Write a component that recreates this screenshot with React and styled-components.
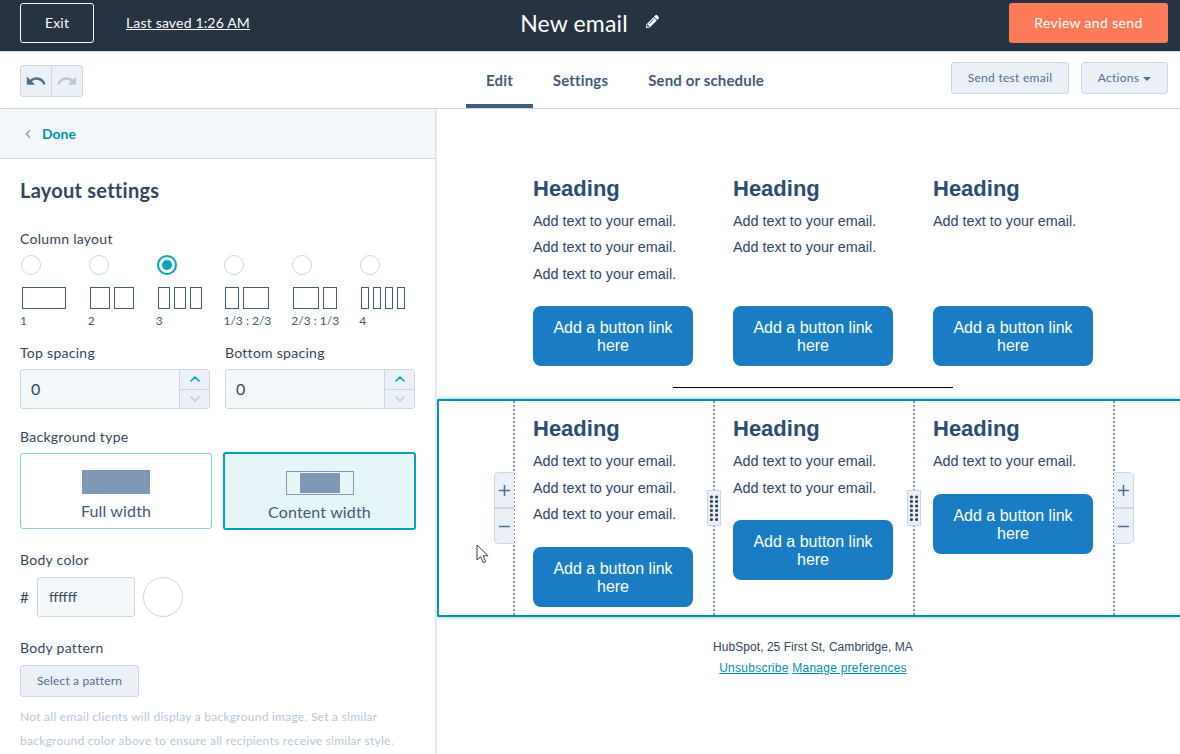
import styled, { createGlobalStyle } from "styled-components";
import { FaPencilAlt } from "react-icons/fa";
import { MdUndo, MdRedo } from "react-icons/md";
import { ChevronLeft, ChevronUp, ChevronDown, Plus, Minus } from "lucide-react";

const GlobalStyle = createGlobalStyle`
  html, body {
    margin: 0;
    padding: 0;
    background: #fff;
    font-family: "Lato", "Liberation Sans", sans-serif;
    color: #33475b;
  }
  * {
    box-sizing: border-box;
  }
`;

const layouts = [
  { label: "1", cells: [44] },
  { label: "2", cells: [20, 20] },
  { label: "3", cells: [12, 12, 12], selected: true },
  { label: "1/3 : 2/3", cells: [14, 26] },
  { label: "2/3 : 1/3", cells: [26, 14] },
  { label: "4", cells: [8, 8, 8, 8] },
];

const columnLines = [3, 2, 1];

const dots = "repeating-linear-gradient(to bottom, #7c98b6 0 2px, transparent 2px 4px)";

const Column = ({ lines, editing, last }) => (
  <EmailColumn $editing={editing} $last={last}>
    <Heading>Heading</Heading>
    {Array.from({ length: lines }).map((_, i) => (
      <EmailText key={i}>Add text to your email.</EmailText>
    ))}
    <EmailButton $pushed={!editing}>Add a button link here</EmailButton>
  </EmailColumn>
);

const Stepper = ({ side }) => (
  <StepperBox $side={side}>
    <StepperPart>
      <Plus size={17} strokeWidth={2.2} />
    </StepperPart>
    <StepperPart>
      <Minus size={17} strokeWidth={2.2} />
    </StepperPart>
  </StepperBox>
);

const DragHandle = ({ left }) => (
  <Handle $left={left}>
    <svg width="8" height="27" viewBox="0 0 8 27">
      {[2, 6.5, 11, 15.5, 20, 24.5].map((y) =>
        [1.5, 6.5].map((x) => (
          <circle key={`${x}-${y}`} cx={x} cy={y} r="1.6" fill="#33475b" />
        ))
      )}
    </svg>
  </Handle>
);

const NumberField = ({ label }) => (
  <Field>
    <FieldLabel>{label}</FieldLabel>
    <NumberBox>
      <NumberValue>0</NumberValue>
      <Arrows>
        <ArrowButton $active>
          <ChevronUp size={16} strokeWidth={2.5} />
        </ArrowButton>
        <ArrowButton>
          <ChevronDown size={16} strokeWidth={2} />
        </ArrowButton>
      </Arrows>
    </NumberBox>
  </Field>
);

export default function App() {
  return (
    <Page>
      <GlobalStyle />
      <TopBar>
        <TopLeft>
          <ExitButton>Exit</ExitButton>
          <SavedLink>Last saved 1:26 AM</SavedLink>
        </TopLeft>
        <Title>
          New email
          <FaPencilAlt size={13} />
        </Title>
        <TopRight>
          <ReviewButton>Review and send</ReviewButton>
        </TopRight>
      </TopBar>

      <Toolbar>
        <UndoSlot>
          <UndoGroup>
            <UndoButton>
              <MdUndo size={22} />
            </UndoButton>
            <UndoButton $off>
              <MdRedo size={22} />
            </UndoButton>
          </UndoGroup>
        </UndoSlot>
        <Tabs>
          <Tab $active>Edit</Tab>
          <Tab>Settings</Tab>
          <Tab>Send or schedule</Tab>
        </Tabs>
        <ToolActions>
          <GhostButton $width={118}>Send test email</GhostButton>
          <GhostButton $width={87}>
            Actions
            <Caret />
          </GhostButton>
        </ToolActions>
      </Toolbar>

      <Workspace>
        <Sidebar>
          <DoneRow>
            <ChevronLeft size={14} strokeWidth={2} color="#7c98b6" />
            <DoneLink>Done</DoneLink>
          </DoneRow>
          <Panel>
            <PanelTitle>Layout settings</PanelTitle>
            <FieldLabel>Column layout</FieldLabel>
            <LayoutGrid>
              {layouts.map((item) => (
                <LayoutOption key={item.label}>
                  <Radio $selected={item.selected} />
                  <Diagram>
                    {item.cells.map((w, i) => (
                      <DiagramCell key={i} $width={w} />
                    ))}
                  </Diagram>
                  <DiagramLabel>{item.label}</DiagramLabel>
                </LayoutOption>
              ))}
            </LayoutGrid>

            <SpacingRow>
              <NumberField label="Top spacing" />
              <NumberField label="Bottom spacing" />
            </SpacingRow>

            <SectionLabel>Background type</SectionLabel>
            <BackgroundRow>
              <BackgroundCard>
                <FullSwatch />
                Full width
              </BackgroundCard>
              <BackgroundCard $selected>
                <ContentSwatch>
                  <ContentSwatchFill />
                </ContentSwatch>
                Content width
              </BackgroundCard>
            </BackgroundRow>

            <SectionLabel $top={21}>Body color</SectionLabel>
            <ColorRow>
              <Hash>#</Hash>
              <ColorInput>ffffff</ColorInput>
              <ColorDot />
            </ColorRow>

            <SectionLabel $top={22}>Body pattern</SectionLabel>
            <PatternButton>Select a pattern</PatternButton>
            <HelpText>
              Not all email clients will display a background image. Set a
              similar background color above to ensure all recipients receive
              similar style.
            </HelpText>
          </Panel>
        </Sidebar>

        <Preview>
          <PlainRow>
            <EmailColumns>
              {columnLines.map((lines, i) => (
                <Column key={i} lines={lines} />
              ))}
            </EmailColumns>
            <Divider />
          </PlainRow>

          <SelectedRow>
            <EmailColumns $editing>
              {columnLines.map((lines, i) => (
                <Column key={i} lines={lines} editing last={i === 2} />
              ))}
            </EmailColumns>
            <Stepper side="left" />
            <Stepper side="right" />
            <DragHandle left={268} />
            <DragHandle left={468} />
            <Cursor viewBox="0 0 13 20" width="13" height="20">
              <path
                d="M1 1v15l3.6-3.3 2.5 6 2.5-1-2.5-5.9h5z"
                fill="#fff"
                stroke="#33475b"
                strokeWidth="1"
              />
            </Cursor>
          </SelectedRow>

          <Footer>
            <FooterLine>HubSpot, 25 First St, Cambridge, MA</FooterLine>
            <FooterLine $links>
              <FooterLink>Unsubscribe</FooterLink> <FooterLink>Manage preferences</FooterLink>
            </FooterLine>
          </Footer>
        </Preview>
      </Workspace>
    </Page>
  );
}

const Page = styled.div`
  display: flex;
  flex-direction: column;
  width: 1180px;
  height: 754px;
  overflow: hidden;
`;

const TopBar = styled.header`
  display: grid;
  grid-template-columns: 1fr auto 1fr;
  align-items: center;
  height: 52px;
  padding: 0 12px 6px;
  background: #253342;
  border-bottom: 1px solid #cbd6e2;
`;

const TopLeft = styled.div`
  display: flex;
  align-items: center;
  gap: 32px;
  padding-left: 8px;
`;

const TopRight = styled.div`
  display: flex;
  justify-content: flex-end;
`;

const ExitButton = styled.button`
  width: 74px;
  height: 40px;
  background: transparent;
  border: 1px solid #fff;
  border-radius: 3px;
  color: #fff;
  font: 400 14px "Lato", sans-serif;
  letter-spacing: 0.2px;
`;

const SavedLink = styled.a`
  color: #fff;
  font-size: 14px;
  letter-spacing: 0.17px;
  text-decoration: underline;
`;

const Title = styled.div`
  display: flex;
  align-items: center;
  gap: 18px;
  margin-left: -1px;
  color: #fff;
  font-size: 23px;
  letter-spacing: 0.15px;
  svg {
    margin-top: -3px;
  }
`;

const ReviewButton = styled.button`
  width: 159px;
  height: 40px;
  background: #ff7a59;
  border: none;
  border-radius: 3px;
  color: #fff;
  font: 400 14px "Lato", sans-serif;
  letter-spacing: 0.35px;
`;

const Toolbar = styled.div`
  display: flex;
  height: 57px;
  padding-right: 12px;
  background: #fff;
  border-bottom: 1px solid #cbd6e2;
`;

const UndoSlot = styled.div`
  width: 466px;
  padding: 13px 0 0 20px;
`;

const UndoGroup = styled.div`
  display: flex;
  width: 63px;
  height: 32px;
  background: #eaf0f6;
  border: 1px solid #cbd6e2;
  border-radius: 3px;
`;

const UndoButton = styled.div`
  display: flex;
  flex: 1;
  align-items: center;
  justify-content: center;
  color: ${(p) => (p.$off ? "#b6c7d8" : "#506e91")};
  & + & {
    border-left: 1px solid #cbd6e2;
  }
`;

const Tabs = styled.nav`
  display: flex;
`;

const Tab = styled.div`
  display: flex;
  align-items: center;
  height: 56px;
  padding: 3px 20px 0;
  color: #425b76;
  font-size: 15px;
  font-weight: 700;
  letter-spacing: 0.15px;
  border-bottom: 4px solid ${(p) => (p.$active ? "#425b76" : "transparent")};
`;

const ToolActions = styled.div`
  display: flex;
  gap: 12px;
  margin-left: auto;
  padding-top: 10px;
`;

const GhostButton = styled.button`
  display: flex;
  align-items: center;
  justify-content: center;
  gap: 4px;
  width: ${(p) => p.$width}px;
  height: 32px;
  padding-bottom: 2px;
  background: #eaf0f6;
  border: 1px solid #cbd6e2;
  border-radius: 3px;
  color: #506e91;
  font: 400 12px "Lato", sans-serif;
  letter-spacing: 0.28px;
`;

const Caret = styled.span`
  width: 0;
  height: 0;
  margin-top: 2px;
  border-left: 4px solid transparent;
  border-right: 4px solid transparent;
  border-top: 4px solid #506e91;
`;

const Workspace = styled.div`
  display: flex;
  flex: 1;
  min-height: 0;
`;

const Sidebar = styled.aside`
  flex: none;
  width: 436px;
  margin-right: 1px;
  overflow: hidden;
  background: #fff;
  border-right: 1px solid #dfe3eb;
  box-shadow: 1px 0 3px rgba(203, 214, 226, 0.7);
`;

const DoneRow = styled.div`
  display: flex;
  align-items: center;
  gap: 7px;
  height: 50px;
  padding-left: 21px;
  background: #f5f8fa;
  border-bottom: 1px solid #cbd6e2;
`;

const DoneLink = styled.a`
  color: #0091ae;
  font-size: 14px;
  font-weight: 700;
`;

const Panel = styled.div`
  padding: 18px 0 0 20px;
`;

const PanelTitle = styled.h2`
  margin: 0 0 27px;
  color: #33475b;
  font-size: 20px;
  line-height: 26px;
  font-weight: 700;
  letter-spacing: 0.25px;
`;

const FieldLabel = styled.div`
  color: #33475b;
  font-size: 14px;
  line-height: 18px;
  letter-spacing: 0.28px;
`;

const SectionLabel = styled(FieldLabel)`
  margin-top: ${(p) => p.$top || 19}px;
`;

const LayoutGrid = styled.div`
  display: grid;
  grid-template-columns: repeat(6, 67.83px);
  margin-top: 7px;
`;

const LayoutOption = styled.div`
  display: flex;
  flex-direction: column;
`;

const Radio = styled.span`
  position: relative;
  width: 20px;
  height: 20px;
  margin-left: 1px;
  background: #fff;
  border-radius: 50%;
  border: ${(p) => (p.$selected ? "2px solid #00a4bd" : "1px solid #cbd6e2")};
  &::after {
    content: "";
    display: ${(p) => (p.$selected ? "block" : "none")};
    position: absolute;
    top: 3px;
    left: 3px;
    width: 10px;
    height: 10px;
    border-radius: 50%;
    background: #00a4bd;
  }
`;

const Diagram = styled.div`
  display: flex;
  gap: 4px;
  margin: 12px 0 0 2px;
`;

const DiagramCell = styled.span`
  width: ${(p) => p.$width}px;
  height: 22px;
  border: 1px solid #425b76;
`;

const DiagramLabel = styled.div`
  margin-top: 4px;
  color: #425b76;
  font-size: 12px;
  line-height: 15px;
`;

const SpacingRow = styled.div`
  display: flex;
  gap: 15px;
  margin-top: 16px;
`;

const Field = styled.div`
  width: 190px;
`;

const NumberBox = styled.div`
  display: flex;
  height: 40px;
  margin-top: 7px;
  background: #f5f8fa;
  border: 1px solid #cbd6e2;
  border-radius: 3px;
`;

const NumberValue = styled.div`
  display: flex;
  flex: 1;
  align-items: center;
  padding: 0 0 1px 10px;
  color: #33475b;
  font-size: 16px;
`;

const Arrows = styled.div`
  display: flex;
  flex-direction: column;
  width: 30px;
  background: #eaf0f6;
  border-left: 1px solid #cbd6e2;
`;

const ArrowButton = styled.div`
  display: flex;
  flex: 1;
  align-items: center;
  justify-content: center;
  color: ${(p) => (p.$active ? "#00a4bd" : "#b6c7d8")};
  & + & {
    border-top: 1px solid #cbd6e2;
  }
`;

const BackgroundRow = styled.div`
  display: flex;
  gap: 11px;
  margin: 7px 0 0;
`;

const BackgroundCard = styled.div`
  display: flex;
  flex-direction: column;
  align-items: center;
  gap: 7px;
  width: ${(p) => (p.$selected ? "193px" : "192px")};
  height: ${(p) => (p.$selected ? "78px" : "76px")};
  margin-top: ${(p) => (p.$selected ? "-1px" : "0")};
  padding-top: ${(p) => (p.$selected ? "17px" : "16px")};
  background: ${(p) => (p.$selected ? "#e5f5f8" : "#fff")};
  border: ${(p) => (p.$selected ? "2px solid #00a4bd" : "1px solid #7fd1de")};
  border-radius: 3px;
  color: #425b76;
  font-size: 16px;
  line-height: 20px;
  letter-spacing: 0.15px;
`;

const FullSwatch = styled.div`
  width: 68px;
  height: 24px;
  background: #7f98b4;
`;

const ContentSwatch = styled.div`
  display: flex;
  justify-content: center;
  width: 68px;
  height: 24px;
  padding-top: 1px;
  border: 1px solid #7f98b4;
`;

const ContentSwatchFill = styled.div`
  width: 40px;
  height: 20px;
  background: #7f98b4;
`;

const ColorRow = styled.div`
  display: flex;
  align-items: center;
  margin-top: 8px;
`;

const Hash = styled.span`
  width: 17px;
  font-size: 15px;
`;

const ColorInput = styled.div`
  display: flex;
  align-items: center;
  width: 98px;
  height: 40px;
  padding: 0 0 2px 11px;
  background: #f5f8fa;
  border: 1px solid #cbd6e2;
  border-radius: 3px;
  font-size: 14px;
`;

const ColorDot = styled.div`
  width: 40px;
  height: 40px;
  margin-left: 8px;
  background: #fff;
  border: 1px solid #cbd6e2;
  border-radius: 50%;
`;

const PatternButton = styled.button`
  display: block;
  width: 119px;
  height: 32px;
  margin-top: 8px;
  padding-bottom: 2px;
  background: #eaf0f6;
  border: 1px solid #cbd6e2;
  border-radius: 3px;
  color: #506e91;
  font: 400 12px "Lato", sans-serif;
  letter-spacing: 0.15px;
`;

const HelpText = styled.p`
  width: 396px;
  margin: 8px 0 0;
  color: #b6c7d8;
  font-size: 12px;
  line-height: 24px;
  letter-spacing: 0.26px;
`;

const Preview = styled.main`
  flex: 1;
  min-width: 0;
  overflow: hidden;
  background: #fff;
  font-family: "Liberation Sans", Arial, sans-serif;
`;

const PlainRow = styled.section`
  height: 290px;
  padding-top: 67px;
`;

const EmailColumns = styled.div`
  display: flex;
  width: 602px;
  height: ${(p) => (p.$editing ? "100%" : "190px")};
  margin-left: ${(p) => (p.$editing ? "74px" : "76px")};
`;

const EmailColumn = styled.div`
  display: flex;
  flex-direction: column;
  width: ${(p) => (p.$last ? "202px" : "200px")};
  padding: ${(p) => (p.$editing ? "15.3px 22px 0 20px" : "0 20px")};
  ${(p) => p.$editing && `background: ${dots} left top / 2px 100% no-repeat;`}
  ${(p) =>
    p.$last &&
    `background: ${dots} left top / 2px 100% no-repeat, ${dots} right top / 2px 100% no-repeat;`}
  ${(p) => p.$editing && !p.$last && "padding-right: 20px;"}
`;

const Heading = styled.h1`
  margin: 0 0 6px;
  color: #2c4c75;
  font-size: 22px;
  line-height: 26px;
  font-weight: 700;
`;

const EmailText = styled.p`
  margin: 0;
  color: #2f4766;
  font-size: 14.4px;
  line-height: 26.4px;
`;

const EmailButton = styled.div`
  flex: none;
  height: 60px;
  margin-top: ${(p) => (p.$pushed ? "auto" : "19px")};
  padding: 13px 10px 0;
  background: #1a7dc4;
  border-radius: 8px;
  color: #fff;
  font-size: 16px;
  line-height: 18px;
  text-align: center;
`;

const Divider = styled.hr`
  width: 280px;
  height: 1px;
  margin: 21px 0 0 236px;
  background: #000;
  border: none;
`;

const SelectedRow = styled.section`
  position: relative;
  height: 218px;
  background: #fff;
  border: 2px solid #0091ae;
  border-right: none;
  border-radius: 2px 0 0 2px;
  box-shadow: 0 0 5px rgba(0, 145, 174, 0.5);
`;

const StepperBox = styled.div`
  position: absolute;
  top: 71px;
  ${(p) => (p.$side === "left" ? "left: 55px;" : "left: 675px;")}
  display: flex;
  flex-direction: column;
  width: 20px;
  height: 72px;
  background: #eaf0f6;
  border: 1px solid #cbd6e2;
  border-${(p) => (p.$side === "left" ? "right" : "left")}: none;
  border-radius: ${(p) => (p.$side === "left" ? "5px 0 0 5px" : "0 5px 5px 0")};
`;

const StepperPart = styled.div`
  display: flex;
  flex: 1;
  align-items: center;
  justify-content: center;
  color: #4f6f95;
  & + & {
    border-top: 2px solid #cbd6e2;
  }
`;

const Handle = styled.div`
  position: absolute;
  top: 89px;
  left: ${(p) => p.$left}px;
  display: flex;
  align-items: center;
  justify-content: center;
  width: 14px;
  height: 36px;
  background: #eaf0f6;
  border: 1px solid #cbd6e2;
`;

const Cursor = styled.svg`
  position: absolute;
  top: 143px;
  left: 37px;
`;

const Footer = styled.footer`
  width: 600px;
  margin: 20px 0 0 76px;
  text-align: center;
`;

const FooterLine = styled.div`
  color: #33475b;
  font-size: 12px;
  line-height: 21px;
  letter-spacing: ${(p) => (p.$links ? "0.25px" : "0.05px")};
`;

const FooterLink = styled.a`
  color: #0091ae;
  text-decoration: underline;
`;
